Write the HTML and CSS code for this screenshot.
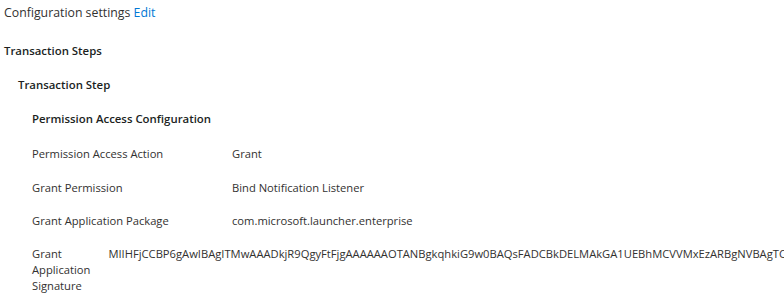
FILE: index.html
```html
<!DOCTYPE html>
<html lang="en">
<head>
<meta charset="utf-8">
<title>Configuration settings</title>
<link rel="stylesheet" href="styles.css">
</head>
<body>
<div class="page">
  <div class="title">Configuration settings <a class="edit" href="#">Edit</a></div>
  <div class="heading h1">Transaction Steps</div>
  <div class="nest">
    <div class="heading h2">Transaction Step</div>
    <div class="nest">
      <div class="heading h3">Permission Access Configuration</div>
      <div class="row">
        <div class="label">Permission Access Action</div>
        <div class="value">Grant</div>
      </div>
      <div class="row">
        <div class="label">Grant Permission</div>
        <div class="value">Bind Notification Listener</div>
      </div>
      <div class="row">
        <div class="label">Grant Application Package</div>
        <div class="value">com.microsoft.launcher.enterprise</div>
      </div>
      <div class="row">
        <div class="label">Grant Application Signature</div>
        <div class="value">MIIHFjCCBP6gAwIBAgITMwAAADkjR9QgyFtFjgAAAAAAOTANBgkqhkiG9w0BAQsFADCBkDELMAkGA1UEBhMCVVMxEzARBgNVBAgTCldhc2hpbmd0b24xEDAOBgNVBAcTB1JlZG1vbmQxHjAcBgNVBAoTFU1pY3Jvc29mdCBDb3Jwb3JhdGlvbjE6MDgGA1UEAxMxTWljcm9zb2Z0</div>
      </div>
    </div>
  </div>
</div>
</body>
</html>
```
FILE: styles.css
```css
html, body {
  margin: 0;
  padding: 0;
  background: #ffffff;
  overflow: hidden;
}
.page {
  font-family: "Open Sans", "Noto Sans", sans-serif;
  font-size: 11.2px;
  line-height: 16px;
  color: #323130;
  padding: 0 0 0 4px;
  overflow: hidden;
}
.title {
  font-size: 12.3px;
  padding: 4.5px 0 14.1px;
}
.edit {
  color: #0078d4;
  text-decoration: none;
}
.heading {
  font-size: 11.4px;
  font-weight: 600;
  color: #201f1e;
  padding: 8.67px 0;
}
.h3 {
  padding-top: 9.83px;
  padding-bottom: 10.6px;
}
.nest {
  padding-left: 14px;
}
.row {
  display: flex;
  align-items: flex-start;
  padding: 8.67px 0;
}
.label {
  flex: 0 1 200px;
  box-sizing: border-box;
  padding-right: 18px;
}
.value {
  flex: 0 0 auto;
  white-space: nowrap;
}
```
